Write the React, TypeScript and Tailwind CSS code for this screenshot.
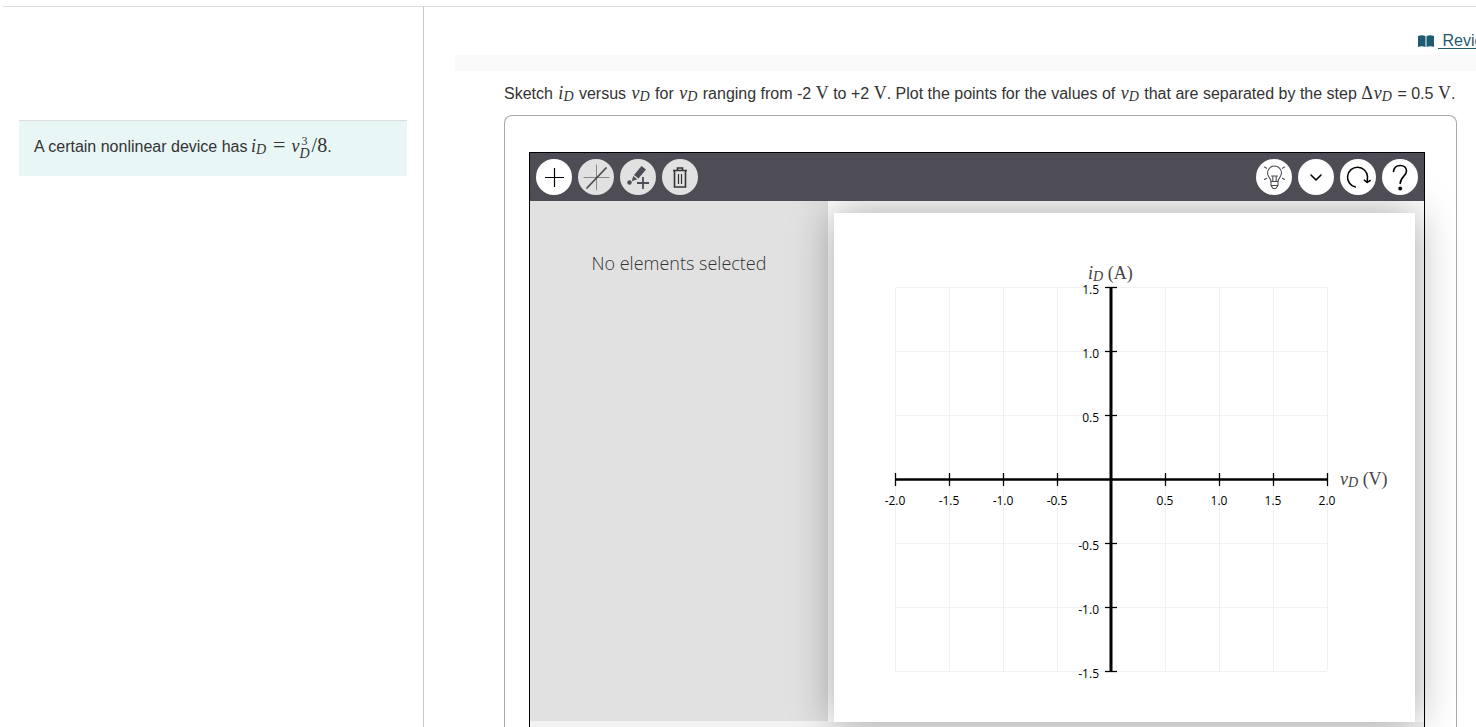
import React from 'react'

const xTicks = [-2, -1.5, -1, -0.5, 0.5, 1, 1.5, 2]
const yTicks = [1.5, 1, 0.5, -0.5, -1, -1.5]

// plot origin and scale inside the graph svg
const toX = (v: number) => 277 + v * 108
const toY = (v: number) => 266 - v * 128

function Var({ name, sub }: { name: string; sub: string }) {
  return (
    <span className="mx-px font-['Liberation_Serif',serif] text-[18px] leading-none italic">
      {name}
      <sub className="-bottom-0.5 text-[14px] leading-none">{sub}</sub>
    </span>
  )
}

function Unit({ children }: { children: React.ReactNode }) {
  return <span className="font-['Liberation_Serif',serif] text-[18px] leading-none">{children}</span>
}

function ToolButton({ label, disabled, children }: { label: string; disabled?: boolean; children: React.ReactNode }) {
  return (
    <button
      type="button"
      aria-label={label}
      disabled={disabled}
      className="flex size-9 items-center justify-center rounded-full bg-white text-black disabled:bg-[#e1e1e1]"
    >
      <svg viewBox="0 0 36 36" className="size-9" fill="none" stroke="currentColor" strokeLinecap="round">
        {children}
      </svg>
    </button>
  )
}

function Toolbar() {
  return (
    <div className="relative z-10 flex h-12 items-center justify-between bg-[#4e4d56] px-1.5">
      <div className="flex gap-1.5">
        <ToolButton label="Add element">
          <path d="M9 18.5h19M18.5 9v19" strokeWidth="1.2" strokeLinecap="butt" />
        </ToolButton>
        <ToolButton label="Add line" disabled>
          <path d="M6 18.5h25M18.5 6v25" stroke="#888" strokeWidth="1" />
          <path d="M9 29L28 9" stroke="#4e4d56" strokeWidth="1.8" />
        </ToolButton>
        <ToolButton label="Add point" disabled>
          <g stroke="none" fill="#4e4d56">
            <circle cx="9.5" cy="23.5" r="2.2" />
            <path d="M21.5 7L26 10.5L18.5 19.5L14 16Z" />
            <path d="M13.2 17L17.3 20.3L11.8 22.2Z" />
          </g>
          <path d="M17 24h12M23 18v12" stroke="#4e4d56" strokeWidth="1.8" strokeLinecap="butt" />
        </ToolButton>
        <ToolButton label="Delete" disabled>
          <g stroke="#333" strokeLinecap="butt">
            <path d="M11 11.5h14M12.5 12v16h11V12" strokeWidth="1.6" />
            <path d="M15.5 11V9h5v2" strokeWidth="1.6" />
            <path d="M16.5 15v10M19.5 15v10" strokeWidth="1.2" />
          </g>
        </ToolButton>
      </div>
      <div className="flex gap-1.5">
        <ToolButton label="Hint">
          <g stroke="#4e4d56" strokeWidth="1.1">
            <path d="M15 22.5c0-3-3.500-4.500-3.500-8.500a7 7 0 0 1 14 0c0 4-3.500 5.500-3.500 8.500z" />
            <path d="M15 22.500v4l2.200 3h2.600l2.200-3v-4M15 26.500h7M15.500 17h6M16.800 17v5M20.200 17v5" />
            <path d="M8.500 8l2 1.300M28.500 8l-2 1.300M8.500 20.500l2-1.300M28.500 20.500l-2-1.300" />
          </g>
        </ToolButton>
        <ToolButton label="More">
          <path d="M13 16l5 5l5-5" strokeWidth="1.6" strokeLinejoin="round" />
        </ToolButton>
        <ToolButton label="Reset">
          <path d="M15.300 28A10 10 0 1 1 27.500 17.500L27.200 23" strokeWidth="1.5" />
          <path d="M24.300 21.200l2.900 2.100l3-1.800" strokeWidth="1.5" />
        </ToolButton>
        <ToolButton label="Help">
          <path d="M11.500 12.500c.5-4 3.500-6 6.800-6c3.500 0 6.200 2 6.200 5.500c0 5-6.300 6-6.300 12.500" strokeWidth="1.6" />
          <circle cx="18.200" cy="29.500" r="1.900" fill="currentColor" stroke="none" />
        </ToolButton>
      </div>
    </div>
  )
}

function Graph() {
  return (
    <svg viewBox="0 0 581 509" className="mx-auto h-[509px] w-[581px]" role="img" aria-label="Empty graph">
      {/* Grid */}
      <g stroke="#f1f1f1" strokeWidth="1">
        {xTicks.map((v) => (
          <line key={v} x1={toX(v) + 0.5} x2={toX(v) + 0.5} y1={toY(1.5)} y2={toY(-1.5)} />
        ))}
        {yTicks.map((v) => (
          <line key={v} x1={toX(-2)} x2={toX(2)} y1={toY(v) + 0.5} y2={toY(v) + 0.5} />
        ))}
      </g>

      {/* Axes */}
      <g stroke="black">
        <path d="M61 266.500H493" strokeWidth="2.500" />
        <path d="M277 74V458" strokeWidth="3" />
        {xTicks.map((v) => (
          <line key={v} x1={toX(v) + 0.5} x2={toX(v) + 0.5} y1="260" y2="273" strokeWidth="1.300" />
        ))}
        {yTicks.map((v) => (
          <line key={v} x1="271" x2="283" y1={toY(v) + 0.5} y2={toY(v) + 0.5} strokeWidth="1.300" />
        ))}
      </g>

      <g className="font-['Open_Sans',sans-serif] text-[12px]">
        {xTicks.map((v) => (
          <text key={v} x={toX(v)} y="292" textAnchor="middle">
            {v.toFixed(1)}
          </text>
        ))}
        {yTicks.map((v) => (
          <text key={v} x="265" y={toY(v) + 7} textAnchor="end">
            {v.toFixed(1)}
          </text>
        ))}
      </g>

      <g className="font-['Liberation_Serif',serif] text-[18px]" fill="#444">
        <text x="254" y="66">
          <tspan className="italic">i</tspan>
          <tspan className="text-[14px] italic" dy="2">D</tspan>
          <tspan dy="-2"> (A)</tspan>
        </text>
        <text x="506" y="272">
          <tspan className="italic">v</tspan>
          <tspan className="text-[14px] italic" dy="2">D</tspan>
          <tspan dy="-2"> (V)</tspan>
        </text>
      </g>
    </svg>
  )
}

export default function App() {
  return (
    <div className="h-screen overflow-hidden bg-white pt-1.5 pl-[3px] font-['Liberation_Sans',sans-serif] text-base text-[#333]">
      <div className="flex h-full border-t border-[#ddd]">
        {/* Problem statement */}
        <aside className="w-[421px] shrink-0 border-r border-[#c3c9ce] px-4">
          <div className="mt-[113px] flex h-14 items-center border-t border-[#ddd] bg-[#e8f6f6] px-[15px] pb-0.5">
            <p className="whitespace-nowrap">
              A certain nonlinear device has{' '}
              <span className="-ml-0.5 font-['Liberation_Serif',serif] text-[18px] leading-none">
                <Var name="i" sub="D" />
                <span className="mx-1.5 text-[22px] leading-none">=</span>
                <i>v</i>
                <span className="inline-flex flex-col align-middle leading-none">
                  <span className="ml-0.5 text-[12px] leading-3">3</span>
                  <i className="text-[14px] leading-[14px]">D</i>
                </span>
                <span className="ml-0.5 text-[20px] leading-none">/8</span>
              </span>
              .
            </p>
          </div>
        </aside>

        <main className="min-w-0 flex-1 pl-[31px]">
          <div className="flex h-12 items-end justify-end pb-0.5">
            <a href="#review" className="flex w-[58px] items-center whitespace-nowrap text-[#1f5a73]">
              <svg viewBox="0 0 16 12" className="mr-1 h-3 w-4 shrink-0" fill="currentColor">
                <path d="M0 1C2.500 0 5 0 7.500 1v11C5 11 2.500 11 0 12zM8.500 1C11 0 13.500 0 16 1v11c-2.500-1-5-1-7.500 0z" />
              </svg>
              <span className="whitespace-pre underline underline-offset-2"> Review</span>
            </a>
          </div>
          <div className="h-4 bg-[#f9f9f9]" />

          <div className="pr-[19px] pl-[49px]">
            <p className="flex h-11 items-center pt-0.5 whitespace-nowrap">
              <span>
                Sketch <Var name="i" sub="D" /> versus <Var name="v" sub="D" /> for <Var name="v" sub="D" /> ranging
                from -2 <Unit>V</Unit> to +2 <Unit>V</Unit>. Plot the points for the values of{' '}
                <Var name="v" sub="D" /> that are separated by the step <Unit>Δ</Unit>
                <Var name="v" sub="D" /> = 0.5 <Unit>V</Unit>.
              </span>
            </p>

            <div className="rounded-t-lg border border-b-0 border-[#aaa] pt-9 pr-[31px] pl-6">
              <div className="border border-black">
                <Toolbar />
                <div className="flex bg-[#f3f3f3]">
                  <div className="mb-px w-[298px] shrink-0 bg-[#e1e1e1] pt-12 text-center">
                    <p className="font-['Open_Sans',sans-serif] text-[18px] leading-7 font-light">No elements selected</p>
                  </div>
                  <div className="flex-1 bg-white pt-3 pr-[9px] pl-1.5">
                    <div className="relative bg-white shadow-[0_0_40px_rgba(0,0,0,0.36)]">
                      <Graph />
                    </div>
                  </div>
                </div>
                <div className="h-12 bg-[#f3f3f3]" />
              </div>
            </div>
          </div>
        </main>
      </div>
    </div>
  )
}
